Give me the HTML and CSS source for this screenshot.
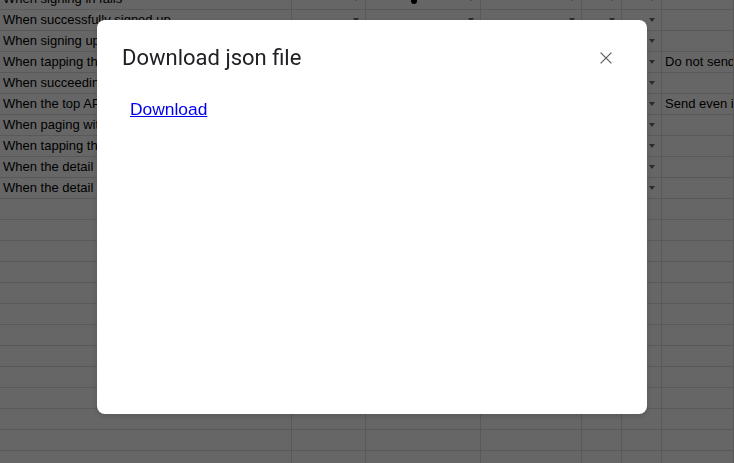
FILE: index.html
```html
<!DOCTYPE html>
<html lang="en">
<head>
    <meta charset="UTF-8">
    <meta name="viewport" content="width=device-width, initial-scale=1.0">
    <title>Download json file</title>
    <link rel="stylesheet" href="styles.css">
</head>
<body>
    <!-- Sheet behind the dialog -->
    <div class="sheet">
        <div class="row">
            <div class="cell name">When signing in fails</div>
            <div class="cell pick"><span class="arrow"></span></div>
            <div class="cell pick"><span class="dot"></span><span class="arrow"></span></div>
            <div class="cell pick"><span class="arrow"></span></div>
            <div class="cell pick"><span class="arrow"></span></div>
            <div class="cell pick"><span class="arrow"></span></div>
            <div class="cell note"></div>
        </div>
        <div class="row">
            <div class="cell name">When successfully signed up</div>
            <div class="cell pick"><span class="arrow"></span></div>
            <div class="cell pick"><span class="arrow"></span></div>
            <div class="cell pick"><span class="arrow"></span></div>
            <div class="cell pick"><span class="arrow"></span></div>
            <div class="cell pick"><span class="arrow"></span></div>
            <div class="cell note"></div>
        </div>
        <div class="row">
            <div class="cell name">When signing up fails</div>
            <div class="cell pick"><span class="arrow"></span></div>
            <div class="cell pick"><span class="arrow"></span></div>
            <div class="cell pick"><span class="arrow"></span></div>
            <div class="cell pick"><span class="arrow"></span></div>
            <div class="cell pick"><span class="arrow"></span></div>
            <div class="cell note"></div>
        </div>
        <div class="row">
            <div class="cell name">When tapping the banner</div>
            <div class="cell pick"><span class="arrow"></span></div>
            <div class="cell pick"><span class="arrow"></span></div>
            <div class="cell pick"><span class="arrow"></span></div>
            <div class="cell pick"><span class="arrow"></span></div>
            <div class="cell pick"><span class="arrow"></span></div>
            <div class="cell note">Do not send the event</div>
        </div>
        <div class="row">
            <div class="cell name">When succeeding to load the list</div>
            <div class="cell pick"><span class="arrow"></span></div>
            <div class="cell pick"><span class="arrow"></span></div>
            <div class="cell pick"><span class="arrow"></span></div>
            <div class="cell pick"><span class="arrow"></span></div>
            <div class="cell pick"><span class="arrow"></span></div>
            <div class="cell note"></div>
        </div>
        <div class="row">
            <div class="cell name">When the top API request fails</div>
            <div class="cell pick"><span class="arrow"></span></div>
            <div class="cell pick"><span class="arrow"></span></div>
            <div class="cell pick"><span class="arrow"></span></div>
            <div class="cell pick"><span class="arrow"></span></div>
            <div class="cell pick"><span class="arrow"></span></div>
            <div class="cell note">Send even if offline</div>
        </div>
        <div class="row">
            <div class="cell name">When paging with the list</div>
            <div class="cell pick"><span class="arrow"></span></div>
            <div class="cell pick"><span class="arrow"></span></div>
            <div class="cell pick"><span class="arrow"></span></div>
            <div class="cell pick"><span class="arrow"></span></div>
            <div class="cell pick"><span class="arrow"></span></div>
            <div class="cell note"></div>
        </div>
        <div class="row">
            <div class="cell name">When tapping the list item</div>
            <div class="cell pick"><span class="arrow"></span></div>
            <div class="cell pick"><span class="arrow"></span></div>
            <div class="cell pick"><span class="arrow"></span></div>
            <div class="cell pick"><span class="arrow"></span></div>
            <div class="cell pick"><span class="arrow"></span></div>
            <div class="cell note"></div>
        </div>
        <div class="row">
            <div class="cell name">When the detail screen is shown</div>
            <div class="cell pick"><span class="arrow"></span></div>
            <div class="cell pick"><span class="arrow"></span></div>
            <div class="cell pick"><span class="arrow"></span></div>
            <div class="cell pick"><span class="arrow"></span></div>
            <div class="cell pick"><span class="arrow"></span></div>
            <div class="cell note"></div>
        </div>
        <div class="row">
            <div class="cell name">When the detail request fails</div>
            <div class="cell pick"><span class="arrow"></span></div>
            <div class="cell pick"><span class="arrow"></span></div>
            <div class="cell pick"><span class="arrow"></span></div>
            <div class="cell pick"><span class="arrow"></span></div>
            <div class="cell pick"><span class="arrow"></span></div>
            <div class="cell note"></div>
        </div>
        <!-- empty rows -->
        <div class="row"><div class="cell"></div><div class="cell"></div><div class="cell"></div><div class="cell"></div><div class="cell"></div><div class="cell"></div><div class="cell"></div></div>
        <div class="row"><div class="cell"></div><div class="cell"></div><div class="cell"></div><div class="cell"></div><div class="cell"></div><div class="cell"></div><div class="cell"></div></div>
        <div class="row"><div class="cell"></div><div class="cell"></div><div class="cell"></div><div class="cell"></div><div class="cell"></div><div class="cell"></div><div class="cell"></div></div>
        <div class="row"><div class="cell"></div><div class="cell"></div><div class="cell"></div><div class="cell"></div><div class="cell"></div><div class="cell"></div><div class="cell"></div></div>
        <div class="row"><div class="cell"></div><div class="cell"></div><div class="cell"></div><div class="cell"></div><div class="cell"></div><div class="cell"></div><div class="cell"></div></div>
        <div class="row"><div class="cell"></div><div class="cell"></div><div class="cell"></div><div class="cell"></div><div class="cell"></div><div class="cell"></div><div class="cell"></div></div>
        <div class="row"><div class="cell"></div><div class="cell"></div><div class="cell"></div><div class="cell"></div><div class="cell"></div><div class="cell"></div><div class="cell"></div></div>
        <div class="row"><div class="cell"></div><div class="cell"></div><div class="cell"></div><div class="cell"></div><div class="cell"></div><div class="cell"></div><div class="cell"></div></div>
        <div class="row"><div class="cell"></div><div class="cell"></div><div class="cell"></div><div class="cell"></div><div class="cell"></div><div class="cell"></div><div class="cell"></div></div>
        <div class="row"><div class="cell"></div><div class="cell"></div><div class="cell"></div><div class="cell"></div><div class="cell"></div><div class="cell"></div><div class="cell"></div></div>
        <div class="row"><div class="cell"></div><div class="cell"></div><div class="cell"></div><div class="cell"></div><div class="cell"></div><div class="cell"></div><div class="cell"></div></div>
        <div class="row"><div class="cell"></div><div class="cell"></div><div class="cell"></div><div class="cell"></div><div class="cell"></div><div class="cell"></div><div class="cell"></div></div>
        <div class="row"><div class="cell"></div><div class="cell"></div><div class="cell"></div><div class="cell"></div><div class="cell"></div><div class="cell"></div><div class="cell"></div></div>
    </div>

    <!-- Modal -->
    <div class="overlay">
        <div class="dialog">
            <div class="dialog-header">
                <h2 class="dialog-title">Download json file</h2>
                <button class="close-btn" aria-label="Close">
                    <svg width="12" height="12" viewBox="0 0 12 12">
                        <path d="M0.6 0.6 L11.4 11.4 M11.4 0.6 L0.6 11.4" stroke="#5f6368" stroke-width="1.3" fill="none"/>
                    </svg>
                </button>
            </div>
            <div class="dialog-body">
                <a href="#" class="download-link">Download</a>
            </div>
        </div>
    </div>
</body>
</html>
```

FILE: styles.css
```css
* {
    box-sizing: border-box;
}

body {
    margin: 0;
    overflow: hidden;
    background-color: white;
    font-family: "Liberation Sans", Arial, sans-serif;
}

/* Hoja de fondo */
.sheet {
    margin-top: -11px;
}

.row {
    display: grid;
    grid-template-columns: 292px 74px 115px 101px 40px 40px 1fr;
    height: 21px;
}

.cell {
    border-right: 1px solid #dedfdf;
    border-bottom: 1px solid #dedfdf;
    font-size: 13px;
    line-height: 20px;
    color: #000;
    white-space: nowrap;
    overflow: hidden;
}

.name,
.note {
    padding-left: 3px;
}

.pick {
    display: flex;
    align-items: center;
    justify-content: flex-end;
    padding-right: 6px;
}

.arrow {
    width: 0;
    height: 0;
    border-left: 3.5px solid transparent;
    border-right: 3.5px solid transparent;
    border-top: 4px solid #6b6b6b;
}

.dot {
    width: 6px;
    height: 6px;
    border-radius: 50%;
    background-color: #000;
    margin-right: 51px;
    margin-top: 3px;
}

/* Modal */
.overlay {
    position: fixed;
    top: 0;
    left: 0;
    right: 0;
    bottom: 0;
    background-color: rgba(0, 0, 0, 0.6);
    padding: 20px 0 0 97px;
}

.dialog {
    width: 550px;
    height: 394px;
    background-color: white;
    border-radius: 8px;
    padding: 24px 24px 24px 25px;
    box-shadow: 0 2px 6px rgba(0, 0, 0, 0.15);
}

.dialog-header {
    display: flex;
    align-items: center;
    justify-content: space-between;
}

.dialog-title {
    margin: 0;
    font-family: Roboto, "Noto Sans", sans-serif;
    font-size: 22px;
    line-height: 28px;
    font-weight: 400;
    color: #202124;
}

.close-btn {
    width: 24px;
    height: 24px;
    margin-right: 5px;
    padding: 0;
    border: none;
    background: none;
    display: flex;
    align-items: center;
    justify-content: center;
    cursor: pointer;
}

.dialog-body {
    margin-top: 27px;
    padding-left: 8px;
}

.download-link {
    font-family: "Liberation Sans", Arial, sans-serif;
    font-size: 17.4px;
    color: #0000ee;
    text-decoration: underline;
}
```
